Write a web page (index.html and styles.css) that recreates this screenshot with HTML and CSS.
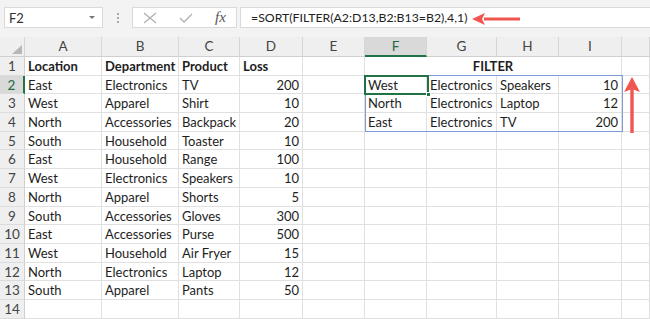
FILE: index.html
```html
<!DOCTYPE html>
<html>
<head>
<meta charset="utf-8">
<link rel="stylesheet" href="styles.css">
</head>
<body>
<div class="app">
  <div class="toolbar">
    <div class="namebox"><span>F2</span><span class="caret"></span></div>
    <div class="dots"><i></i><i></i><i></i></div>
    <div class="fxbox">
      <svg class="ico" width="14" height="12" viewBox="0 0 14 12"><path d="M1 1 L13 11 M13 1 L1 11" stroke="#b0b0b0" stroke-width="1.3" fill="none"/></svg>
      <svg class="ico" width="14" height="12" viewBox="0 0 14 12"><path d="M1 6 L5 10 L13 2" stroke="#b0b0b0" stroke-width="1.3" fill="none"/></svg>
      <span class="fx">fx</span>
    </div>
    <div class="formula">=SORT(FILTER(A2:D13,B2:B13=B2),4,1)</div>
  </div>
  <div class="sheet">
    <div class="grid">
      <div class="h corner"><span class="tri"></span></div>
      <div class="h">A</div><div class="h">B</div><div class="h">C</div><div class="h">D</div><div class="h">E</div>
      <div class="h sel-col">F</div><div class="h">G</div><div class="h">H</div><div class="h">I</div><div class="h"></div>

      <div class="r">1</div><div class="c b">Location</div><div class="c b">Department</div><div class="c b">Product</div><div class="c b">Loss</div><div class="c"></div><div class="c b ctr span4">FILTER</div><div class="c"></div>

      <div class="r sel-row">2</div><div class="c">East</div><div class="c">Electronics</div><div class="c">TV</div><div class="c n">200</div><div class="c"></div><div class="c">West</div><div class="c">Electronics</div><div class="c">Speakers</div><div class="c n">10</div><div class="c"></div>

      <div class="r">3</div><div class="c">West</div><div class="c">Apparel</div><div class="c">Shirt</div><div class="c n">10</div><div class="c"></div><div class="c">North</div><div class="c">Electronics</div><div class="c">Laptop</div><div class="c n">12</div><div class="c"></div>

      <div class="r">4</div><div class="c">North</div><div class="c">Accessories</div><div class="c">Backpack</div><div class="c n">20</div><div class="c"></div><div class="c">East</div><div class="c">Electronics</div><div class="c">TV</div><div class="c n">200</div><div class="c"></div>

      <div class="r">5</div><div class="c">South</div><div class="c">Household</div><div class="c">Toaster</div><div class="c n">10</div><div class="c"></div><div class="c"></div><div class="c"></div><div class="c"></div><div class="c"></div><div class="c"></div>

      <div class="r">6</div><div class="c">East</div><div class="c">Household</div><div class="c">Range</div><div class="c n">100</div><div class="c"></div><div class="c"></div><div class="c"></div><div class="c"></div><div class="c"></div><div class="c"></div>

      <div class="r">7</div><div class="c">West</div><div class="c">Electronics</div><div class="c">Speakers</div><div class="c n">10</div><div class="c"></div><div class="c"></div><div class="c"></div><div class="c"></div><div class="c"></div><div class="c"></div>

      <div class="r">8</div><div class="c">North</div><div class="c">Apparel</div><div class="c">Shorts</div><div class="c n">5</div><div class="c"></div><div class="c"></div><div class="c"></div><div class="c"></div><div class="c"></div><div class="c"></div>

      <div class="r">9</div><div class="c">South</div><div class="c">Accessories</div><div class="c">Gloves</div><div class="c n">300</div><div class="c"></div><div class="c"></div><div class="c"></div><div class="c"></div><div class="c"></div><div class="c"></div>

      <div class="r">10</div><div class="c">East</div><div class="c">Accessories</div><div class="c">Purse</div><div class="c n">500</div><div class="c"></div><div class="c"></div><div class="c"></div><div class="c"></div><div class="c"></div><div class="c"></div>

      <div class="r">11</div><div class="c">West</div><div class="c">Household</div><div class="c">Air Fryer</div><div class="c n">15</div><div class="c"></div><div class="c"></div><div class="c"></div><div class="c"></div><div class="c"></div><div class="c"></div>

      <div class="r">12</div><div class="c">North</div><div class="c">Electronics</div><div class="c">Laptop</div><div class="c n">12</div><div class="c"></div><div class="c"></div><div class="c"></div><div class="c"></div><div class="c"></div><div class="c"></div>

      <div class="r">13</div><div class="c">South</div><div class="c">Apparel</div><div class="c">Pants</div><div class="c n">50</div><div class="c"></div><div class="c"></div><div class="c"></div><div class="c"></div><div class="c"></div><div class="c"></div>

      <div class="r">14</div><div class="c"></div><div class="c"></div><div class="c"></div><div class="c"></div><div class="c"></div><div class="c"></div><div class="c"></div><div class="c"></div><div class="c"></div><div class="c"></div>
    </div>
    <div class="spill"></div>
    <div class="active"><span class="handle"></span></div>
    <svg class="arrow-left" width="50" height="12" viewBox="0 0 50 12"><path d="M12 4.5 H48 V7.5 H12 Z" fill="#f0554f"/><path d="M0 6 L13 0 L10 6 L13 12 Z" fill="#f0554f"/></svg>
    <svg class="arrow-up" width="16" height="56" viewBox="0 0 16 56"><path d="M6.3 12 H9.7 V56 H6.3 Z" fill="#f0554f"/><path d="M8 0 L16 15 L8 12 L0 15 Z" fill="#f0554f"/></svg>
  </div>
</div>
</body>
</html>
```

FILE: styles.css
```css
* { box-sizing: border-box; margin: 0; padding: 0; }
html, body { width: 650px; height: 319px; overflow: hidden; background: #fff; }
body { font-family: Lato, "Liberation Sans", sans-serif; font-size: 13px; color: #1e1e1e; }

.app { position: relative; width: 650px; height: 319px; }

.toolbar {
  height: 37px;
  background: #f3f3f3;
  display: flex;
  align-items: flex-start;
  padding: 7px 0 0 4px;
}
.namebox {
  width: 99px; height: 21px;
  background: #fff;
  border: 1px solid #dadada;
  display: flex; align-items: center; justify-content: space-between;
  padding: 0 7px 0 4px;
  color: #333;
}
.caret {
  width: 0; height: 0;
  border-left: 3px solid transparent;
  border-right: 3px solid transparent;
  border-top: 3px solid #777;
}
.dots {
  width: 29px; height: 21px;
  display: flex; flex-direction: column; align-items: center; justify-content: center; gap: 2px;
}
.dots i { display: block; width: 2px; height: 2px; background: #a8a8a8; }
.fxbox {
  width: 105px; height: 21px;
  background: #fff;
  border: 1px solid #dadada;
  display: flex; align-items: center;
  padding-left: 10px; gap: 22px;
}
.fx {
  font-family: "Liberation Serif", serif; font-style: italic;
  font-size: 15px; color: #555; line-height: 1;
}
.formula {
  flex: 1; height: 21px; margin-left: 3px;
  background: #fff;
  border: 1px solid #dadada; border-right: none;
  padding-left: 10px;
  line-height: 19px;
  font-size: 12.3px;
  color: #222;
}

.sheet { position: relative; }
.grid {
  display: grid;
  grid-template-columns: 25px 77px 77px 61px 63px 62px 62px 70px 62px 63px 28px;
  grid-template-rows: 20px;
  grid-auto-rows: 18.69px;
}
.h {
  background: #efefef;
  border-right: 1px solid #d6d6d6;
  border-bottom: 1px solid #cfcfcf;
  text-align: center;
  color: #444;
  line-height: 19px;
  font-size: 13.5px;
}
.corner { position: relative; }
.tri {
  position: absolute; left: 12px; top: 8px;
  width: 0; height: 0;
  border-left: 10px solid transparent;
  border-bottom: 9px solid #b7b7b7;
}
.sel-col { background: #d9d9d9; border-bottom: 2px solid #217346; color: #1d6b3f; }
.r {
  background: #efefef;
  border-right: 1px solid #cfcfcf;
  border-bottom: 1px solid #dcdcdc;
  text-align: center;
  color: #444;
  line-height: 18px;
  font-size: 13.5px;
}
.sel-row { background: #d9d9d9; border-right: 2px solid #217346; color: #1d6b3f; }
.c {
  border-right: 1px solid #e0e0e0;
  border-bottom: 1px solid #e0e0e0;
  padding: 0 3px;
  line-height: 19px;
  white-space: nowrap;
  overflow: hidden;
}
.b { font-weight: bold; }
.n { text-align: right; }
.ctr { text-align: center; }
.span4 { grid-column: span 4; }

.spill {
  position: absolute;
  left: 365px; top: 38px; width: 258px; height: 57px;
  border: 1px solid #7d9bd4;
}
.active {
  position: absolute;
  left: 364px; top: 38px; width: 65px; height: 20px;
  border: 2px solid #217346;
}
.handle {
  position: absolute; right: -4px; bottom: -4px;
  width: 5px; height: 5px; background: #217346; border: 1px solid #fff;
}
.arrow-left { position: absolute; left: 472px; top: -24px; }
.arrow-up { position: absolute; left: 624px; top: 40px; }
```
